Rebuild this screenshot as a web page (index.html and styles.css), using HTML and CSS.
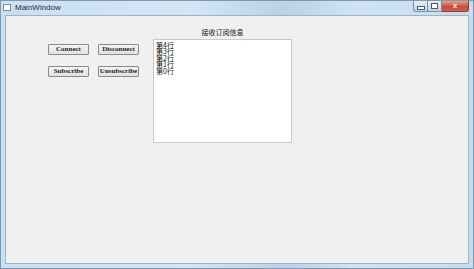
FILE: index.html
```html
<!DOCTYPE html>
<html>
<head>
<meta charset="utf-8">
<link rel="stylesheet" href="styles.css">
</head>
<body>
<div class="window">
  <div class="titlebar">
    <div class="title-left">
      <span class="app-icon"></span>
      <span class="title">MainWindow</span>
    </div>
    <div class="controls">
      <span class="ctl min"><span class="min-bar"></span></span>
      <span class="ctl max"><span class="max-box"></span></span>
      <span class="ctl close">x</span>
    </div>
  </div>
  <div class="client">
    <div class="buttons">
      <button class="btn">Connect</button>
      <button class="btn">Disconnect</button>
      <button class="btn">Subscribe</button>
      <button class="btn">Unsubscribe</button>
    </div>
    <div class="recv">
      <div class="recv-label">接收订阅信息</div>
      <div class="recv-box">
        <div class="line">第4行</div>
        <div class="line">第3行</div>
        <div class="line">第2行</div>
        <div class="line">第1行</div>
        <div class="line">第0行</div>
      </div>
    </div>
  </div>
</div>
</body>
</html>
```
FILE: styles.css
```css
html, body {
  margin: 0;
  padding: 0;
  width: 474px;
  height: 269px;
  overflow: hidden;
}
.window {
  width: 474px;
  height: 269px;
  box-sizing: border-box;
  background: linear-gradient(90deg, #c9dff2 0%, #d3e6f6 40%, #b9d2e6 60%, #cfe3f4 75%, #c6ddf1 100%);
  display: flex;
  flex-direction: column;
  border: 1px solid #7f98b2;
}
.titlebar {
  height: 14px;
  display: flex;
  justify-content: space-between;
  align-items: flex-start;
}
.title-left {
  display: flex;
  align-items: center;
  height: 13px;
  padding-left: 2px;
  gap: 4px;
}
.app-icon {
  width: 8px;
  height: 7px;
  background: #ffffff;
  border: 1px solid #7e8a96;
  box-sizing: border-box;
}
.title {
  font-family: "Liberation Sans", "Noto Sans", sans-serif;
  font-size: 8px;
  color: #1e2a36;
}
.controls {
  display: flex;
  margin-right: 4px;
}
.ctl {
  height: 11px;
  box-sizing: border-box;
  border: 1px solid #7a8ea4;
  border-top: none;
  display: flex;
  align-items: center;
  justify-content: center;
  background: linear-gradient(#e6eef6, #c2d4e6);
}
.min { width: 15px; border-radius: 0 0 0 3px; }
.max { width: 14px; border-left: none; }
.close {
  width: 27px;
  border-left: none;
  border-radius: 0 0 3px 0;
  background: linear-gradient(#e8a090, #c74a36 60%, #d6654c);
  color: #ffffff;
  font-family: "Liberation Sans", sans-serif;
  font-size: 8px;
  font-weight: bold;
  line-height: 1;
  border-color: #8a3a2e;
}
.min-bar {
  width: 6px;
  height: 2px;
  background: #fff;
  border: 1px solid #4a5a6a;
  margin-top: 4px;
}
.max-box {
  width: 5px;
  height: 4px;
  border: 1px solid #4a5a6a;
  background: #fff;
}
.client {
  flex: 1;
  margin: 0 4px 4px 4px;
  background: #f0f0f0;
  border: 1px solid #9fb3c6;
  display: flex;
  align-items: flex-start;
}
.buttons {
  display: grid;
  grid-template-columns: 41px 41px;
  grid-auto-rows: 11px;
  column-gap: 9px;
  row-gap: 11px;
  margin-left: 42px;
  margin-top: 28px;
}
.btn {
  margin: 0;
  padding: 0;
  box-sizing: border-box;
  height: 11px;
  border: 1px solid #8a8a8a;
  border-radius: 1px;
  background: linear-gradient(#f4f4f4, #e2e2e2);
  font-family: "Liberation Serif", serif;
  font-size: 7px;
  font-weight: bold;
  color: #222;
  line-height: 9px;
}
.recv {
  margin-left: 14px;
  margin-top: 11px;
  display: flex;
  flex-direction: column;
  align-items: center;
}
.recv-label {
  font-family: "Noto Sans CJK SC", sans-serif;
  font-size: 7px;
  line-height: 10px;
  color: #111;
  height: 12px;
}
.recv-box {
  width: 139px;
  height: 104px;
  box-sizing: border-box;
  background: #ffffff;
  border: 1px solid #c8c8c8;
  padding: 2px 2px;
}
.line {
  font-family: "Noto Sans CJK SC", sans-serif;
  font-size: 7px;
  line-height: 6.4px;
  color: #111;
  white-space: nowrap;
}
```
